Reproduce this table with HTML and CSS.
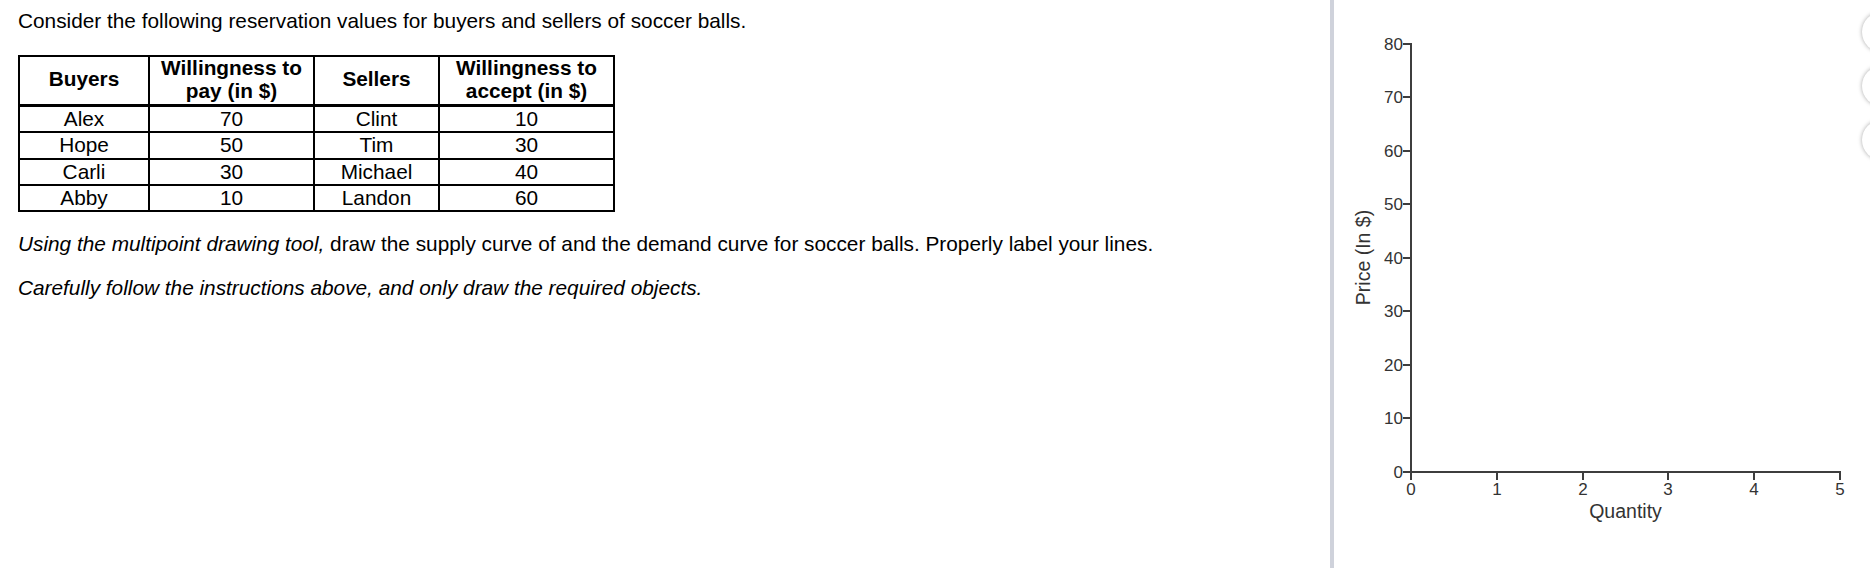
FILE: index.html
```html
<!DOCTYPE html>
<html lang="en">
<head>
<meta charset="utf-8">
<title>Soccer balls – supply and demand</title>
<link rel="stylesheet" href="styles.css">
</head>
<body>
<div class="page">
  <main class="question">
    <p class="intro">Consider the following reservation values for buyers and sellers of soccer balls.</p>
    <table class="values">
      <colgroup>
        <col class="c-buyer"><col class="c-pay"><col class="c-seller"><col class="c-accept">
      </colgroup>
      <thead>
        <tr>
          <th>Buyers</th>
          <th>Willingness to<br>pay (in $)</th>
          <th>Sellers</th>
          <th>Willingness to<br>accept (in $)</th>
        </tr>
      </thead>
      <tbody>
        <tr><td>Alex</td><td>70</td><td>Clint</td><td>10</td></tr>
        <tr><td>Hope</td><td>50</td><td>Tim</td><td>30</td></tr>
        <tr><td>Carli</td><td>30</td><td>Michael</td><td>40</td></tr>
        <tr><td>Abby</td><td>10</td><td>Landon</td><td>60</td></tr>
      </tbody>
    </table>
    <p class="instr"><em>Using the multipoint drawing tool,</em> draw the supply curve of and the demand curve for soccer balls. Properly label your lines.</p>
    <p class="instr"><em>Carefully follow the instructions above, and only draw the required objects.</em></p>
  </main>
  <div class="divider"></div>
  <section class="graph-panel">
    <svg class="chart" width="528" height="568" viewBox="1334 0 528 568" xmlns="http://www.w3.org/2000/svg">
      <g class="axis-lines">
        <path d="M1403,44H1411V472H1403"/>
        <path d="M1411,480V472H1840V480"/>
        <path d="M1403,97H1411M1403,151H1411M1403,204H1411M1403,258H1411M1403,311H1411M1403,365H1411M1403,418H1411"/>
        <path d="M1497,472V480M1583,472V480M1668,472V480M1754,472V480"/>
      </g>
      <g class="tick-y">
        <text x="1403" y="44">80</text>
        <text x="1403" y="97">70</text>
        <text x="1403" y="151">60</text>
        <text x="1403" y="204">50</text>
        <text x="1403" y="258">40</text>
        <text x="1403" y="311">30</text>
        <text x="1403" y="365">20</text>
        <text x="1403" y="418">10</text>
        <text x="1403" y="472">0</text>
      </g>
      <g class="tick-x">
        <text x="1411" y="495">0</text>
        <text x="1497" y="495">1</text>
        <text x="1583" y="495">2</text>
        <text x="1668" y="495">3</text>
        <text x="1754" y="495">4</text>
        <text x="1840" y="495">5</text>
      </g>
      <text class="axis-title" x="1625.5" y="518">Quantity</text>
      <text class="axis-title" transform="translate(1370 257.5) rotate(-90)">Price (In $)</text>
    </svg>
    <div class="tools">
      <span class="tool"></span>
      <span class="tool"></span>
      <span class="tool"></span>
    </div>
  </section>
</div>
</body>
</html>
```

FILE: styles.css
```css
html, body {
  margin: 0;
  padding: 0;
  background: #fff;
}

body {
  font-family: "Liberation Sans", Arial, Helvetica, sans-serif;
  overflow: hidden;
}

.page {
  display: flex;
  width: 1870px;
  height: 568px;
  overflow: hidden;
}

.question {
  flex: 0 0 1330px;
  box-sizing: border-box;
  padding: 9px 0 0 18px;
  font-size: 20.8px;
  line-height: 24px;
  color: #000;
}

.question p {
  margin: 0;
}

.intro {
  margin-bottom: 22px !important;
}

.values {
  border-collapse: collapse;
  table-layout: fixed;
  width: 595px;
  border: 2px solid #000;
}

.c-buyer { width: 130px; }
.c-pay { width: 165px; }
.c-seller { width: 125px; }
.c-accept { width: 175px; }

.values th,
.values td {
  border: 2px solid #000;
  padding: 0;
  text-align: center;
  vertical-align: middle;
  line-height: 24.3px;
}

.values th {
  font-weight: bold;
  line-height: 22.5px;
  padding: 0 0 2px;
  border-bottom: 3px solid #000;
}

.instr {
  margin-top: 20px !important;
}

.divider {
  flex: 0 0 4px;
  background: #cfd2db;
}

.graph-panel {
  flex: 0 0 auto;
  display: flex;
}

.chart {
  display: block;
  flex: 0 0 528px;
}

.axis-lines path {
  fill: none;
  stroke: #3d3d3d;
  stroke-width: 2;
}

.tick-y text,
.tick-x text,
.axis-title {
  font-family: "Liberation Sans", Arial, Helvetica, sans-serif;
  fill: #333;
}

.tick-y text {
  font-size: 17px;
  text-anchor: end;
  dominant-baseline: central;
}

.tick-x text {
  font-size: 17px;
  text-anchor: middle;
}

.axis-title {
  font-size: 19.5px;
  text-anchor: middle;
}

.tools {
  flex: 0 0 auto;
  display: flex;
  flex-direction: column;
  gap: 14px;
  padding: 12px 0 0 0;
}

.tool {
  display: block;
  width: 40px;
  height: 40px;
  border-radius: 50%;
  background: #fff;
  box-shadow: 0 0 4px rgba(0, 0, 0, 0.35);
}
```
